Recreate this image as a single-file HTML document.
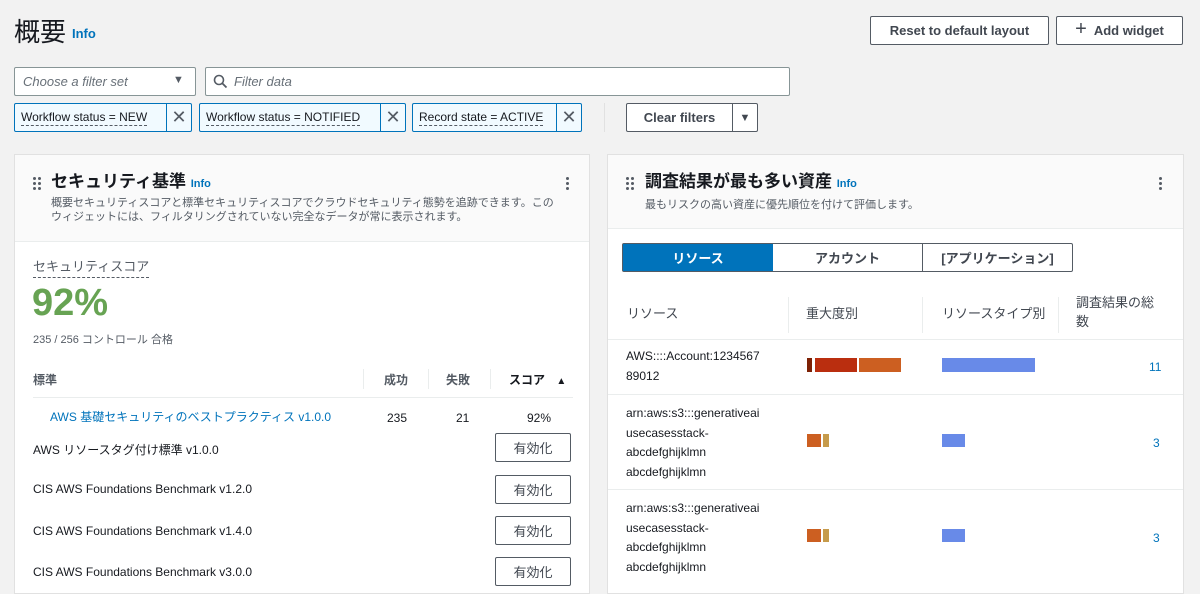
<!DOCTYPE html>
<html><head><meta charset="utf-8"><style>
*{box-sizing:border-box;margin:0;padding:0}
body{width:1200px;height:573px;overflow:hidden;background:#f2f2f2;font-family:"Liberation Sans","Noto Sans CJK JP",sans-serif;color:#16191f;position:relative}
.a{position:absolute;white-space:nowrap}
.btn{position:absolute;border:1px solid #545b64;background:#fff;border-radius:2px;font-weight:bold;font-size:13px;color:#414750;display:flex;align-items:center;justify-content:center;white-space:nowrap}
.tok{position:absolute;top:103px;height:29px;border:1px solid #0073bb;background:#f1faff;border-radius:2px;font-size:12px;display:flex;white-space:nowrap}
.tok span{flex:1;padding:0 6px;display:flex;align-items:center;border-right:1px solid #0073bb}
.tok span u{text-decoration:none;border-bottom:1px dashed #545b64;line-height:15px}
.tok b{width:24px;flex:none;display:flex;align-items:center;justify-content:center;font-weight:normal;font-size:18px;color:#545b64}
.panel{position:absolute;top:154px;background:#fff;border:1px solid #e1e1e1;height:440px}
.ph{background:#fafafa;border-bottom:1px solid #eaeded;position:relative}
.blue{color:#0073bb}
.dots{position:absolute;width:3px}
.dots i{display:block;width:3px;height:3px;background:#545b64;border-radius:50%;margin-bottom:2px}
.en{position:absolute;width:76px;height:29px;left:480px;font-size:13px;font-weight:normal}
.bar{position:absolute;height:14px}
</style></head><body>
<div class="a" style="left:14px;top:12px;font-size:26px;color:#16191f">概要</div>
<div class="a blue" style="left:72px;top:26px;font-size:13px;font-weight:bold">Info</div>
<div class="btn" style="left:870px;top:16px;width:179px;height:29px">Reset to default layout</div>
<div class="btn" style="left:1056px;top:16px;width:127px;height:29px"><span style="font-size:20px;font-weight:normal;margin-right:7px;margin-top:-2px">+</span>Add widget</div>

<div class="a" style="left:14px;top:67px;width:182px;height:29px;background:#fff;border:1px solid #879596;border-radius:2px"></div>
<div class="a" style="left:23px;top:74px;font-size:13px;font-style:italic;color:#687078">Choose a filter set</div>
<div class="a" style="left:173px;top:74px;font-size:11px;color:#545b64">▼</div>
<div class="a" style="left:205px;top:67px;width:585px;height:29px;background:#fff;border:1px solid #879596;border-radius:2px"></div>
<svg class="a" style="left:213px;top:74px" width="15" height="15" viewBox="0 0 15 15"><circle cx="6" cy="6" r="4.5" fill="none" stroke="#545b64" stroke-width="1.6"/><path d="M9.5 9.5L13.5 13.5" stroke="#545b64" stroke-width="1.8"/></svg>
<div class="a" style="left:234px;top:74px;font-size:13px;font-style:italic;color:#687078">Filter data</div>

<div class="tok" style="left:14px;width:178px"><span><u>Workflow status = NEW</u></span><b>✕</b></div>
<div class="tok" style="left:199px;width:207px"><span><u>Workflow status = NOTIFIED</u></span><b>✕</b></div>
<div class="tok" style="left:412px;width:170px"><span><u>Record state = ACTIVE</u></span><b>✕</b></div>
<div class="a" style="left:604px;top:103px;width:1px;height:29px;background:#e1e1e1"></div>
<div class="btn" style="left:626px;top:103px;width:132px;height:29px;justify-content:flex-start"><span style="width:106px;text-align:center;border-right:1px solid #545b64;line-height:27px">Clear filters</span><span style="flex:1;text-align:center;font-size:11px">▼</span></div>

<!-- left panel -->
<div class="panel" style="left:14px;width:576px">
 <div class="ph" style="height:87px">
  <div class="dots" style="left:18px;top:22px"><i></i><i></i><i></i></div><div class="dots" style="left:23px;top:22px"><i></i><i></i><i></i></div>
  <div class="a" style="left:36px;top:17px;font-size:17px;line-height:20px;font-weight:bold">セキュリティ基準 <span class="blue" style="font-size:11px">Info</span></div>
  <div class="a" style="left:36px;top:41px;font-size:11px;color:#545b64;line-height:14px">概要セキュリティスコアと標準セキュリティスコアでクラウドセキュリティ態勢を追跡できます。この<br>ウィジェットには、フィルタリングされていない完全なデータが常に表示されます。</div>
  <div class="dots" style="left:551px;top:22px"><i></i><i></i><i></i></div>
 </div>
 <div class="a" style="left:18px;top:103px;font-size:13px;color:#545b64;border-bottom:1px dashed #545b64;padding-bottom:2px;line-height:17px">セキュリティスコア</div>
 <div class="a" style="left:17px;top:128px;font-size:38px;line-height:40px;font-weight:bold;color:#67a353">92%</div>
 <div class="a" style="left:18px;top:176px;font-size:11px;color:#545b64">235 / 256 コントロール 合格</div>
 <div class="a" style="left:18px;top:216px;font-size:12px;font-weight:bold;color:#545b64">標準</div>
 <div class="a" style="left:348px;top:214px;width:1px;height:20px;background:#eaeded"></div>
 <div class="a" style="left:413px;top:214px;width:1px;height:20px;background:#eaeded"></div>
 <div class="a" style="left:475px;top:214px;width:1px;height:20px;background:#eaeded"></div>
 <div class="a" style="left:369px;top:216px;font-size:12px;font-weight:bold;color:#545b64">成功</div>
 <div class="a" style="left:431px;top:216px;font-size:12px;font-weight:bold;color:#545b64">失敗</div>
 <div class="a" style="left:494px;top:216px;font-size:12px;font-weight:bold">スコア <span style="font-size:10px;margin-left:8px">▲</span></div>
 <div class="a" style="left:18px;top:242px;width:540px;height:1px;background:#eaeded"></div>
 <div class="a blue" style="left:35px;top:253px;font-size:12px">AWS 基礎セキュリティのベストプラクティス v1.0.0</div>
 <div class="a" style="left:372px;top:256px;font-size:12px">235</div>
 <div class="a" style="left:441px;top:256px;font-size:12px">21</div>
 <div class="a" style="left:512px;top:256px;font-size:12px">92%</div>
 <div class="a" style="left:18px;top:286px;font-size:12px">AWS リソースタグ付け標準 v1.0.0</div>
 <div class="btn en" style="top:278px">有効化</div>
 <div class="a" style="left:18px;top:327px;font-size:12px">CIS AWS Foundations Benchmark v1.2.0</div>
 <div class="btn en" style="top:320px">有効化</div>
 <div class="a" style="left:18px;top:369px;font-size:12px">CIS AWS Foundations Benchmark v1.4.0</div>
 <div class="btn en" style="top:361px">有効化</div>
 <div class="a" style="left:18px;top:410px;font-size:12px">CIS AWS Foundations Benchmark v3.0.0</div>
 <div class="btn en" style="top:402px">有効化</div>
</div>

<!-- right panel -->
<div class="panel" style="left:607px;width:577px">
 <div class="ph" style="height:74px">
  <div class="dots" style="left:18px;top:22px"><i></i><i></i><i></i></div><div class="dots" style="left:23px;top:22px"><i></i><i></i><i></i></div>
  <div class="a" style="left:37px;top:17px;font-size:17px;line-height:20px;font-weight:bold">調査結果が最も多い資産 <span class="blue" style="font-size:11px">Info</span></div>
  <div class="a" style="left:37px;top:41px;font-size:11px;color:#545b64">最もリスクの高い資産に優先順位を付けて評価します。</div>
  <div class="dots" style="left:551px;top:22px"><i></i><i></i><i></i></div>
 </div>
 <div class="a" style="left:14px;top:88px;width:451px;height:29px;border:1px solid #545b64;border-radius:2px;display:flex;font-size:13px;font-weight:bold;color:#414750">
  <div style="width:150px;background:#0073bb;color:#fff;display:flex;align-items:center;justify-content:center">リソース</div>
  <div style="width:150px;border-right:1px solid #545b64;display:flex;align-items:center;justify-content:center">アカウント</div>
  <div style="flex:1;display:flex;align-items:center;justify-content:center">[アプリケーション]</div>
 </div>
 <div class="a" style="left:19px;top:148px;font-size:13px;color:#414750">リソース</div>
 <div class="a" style="left:180px;top:142px;width:1px;height:36px;background:#eaeded"></div>
 <div class="a" style="left:198px;top:148px;font-size:13px;color:#414750">重大度別</div>
 <div class="a" style="left:314px;top:142px;width:1px;height:36px;background:#eaeded"></div>
 <div class="a" style="left:334px;top:148px;font-size:13px;color:#414750">リソースタイプ別</div>
 <div class="a" style="left:450px;top:142px;width:1px;height:36px;background:#eaeded"></div>
 <div class="a" style="left:468px;top:138px;font-size:13px;color:#414750;line-height:19px">調査結果の総<br>数</div>
 <div class="a" style="left:0;top:184px;width:575px;height:1px;background:#eaeded"></div>
 <div class="a" style="left:18px;top:191px;font-size:12px;line-height:20px">AWS::::Account:1234567<br>89012</div>
 <div class="bar" style="left:199px;top:203px;width:5px;background:#7d2105"></div>
 <div class="bar" style="left:207px;top:203px;width:42px;background:#ba2e0f"></div>
 <div class="bar" style="left:251px;top:203px;width:42px;background:#cc5f21"></div>
 <div class="bar" style="left:334px;top:203px;width:93px;background:#688ae8"></div>
 <div class="a blue" style="left:541px;top:205px;font-size:12px">11</div>
 <div class="a" style="left:0;top:239px;width:575px;height:1px;background:#eaeded"></div>
 <div class="a" style="left:18px;top:249px;font-size:12px;line-height:19.5px">arn:aws:s3:::generativeai<br>usecasesstack-<br>abcdefghijklmn<br>abcdefghijklmn</div>
 <div class="bar" style="left:199px;top:279px;width:14px;height:13px;background:#cc5f21"></div>
 <div class="bar" style="left:215px;top:279px;width:6px;height:13px;background:#c69b4b"></div>
 <div class="bar" style="left:334px;top:279px;width:23px;height:13px;background:#688ae8"></div>
 <div class="a blue" style="left:545px;top:281px;font-size:12px">3</div>
 <div class="a" style="left:0;top:334px;width:575px;height:1px;background:#eaeded"></div>
 <div class="a" style="left:18px;top:344px;font-size:12px;line-height:19.5px">arn:aws:s3:::generativeai<br>usecasesstack-<br>abcdefghijklmn<br>abcdefghijklmn</div>
 <div class="bar" style="left:199px;top:374px;width:14px;height:13px;background:#cc5f21"></div>
 <div class="bar" style="left:215px;top:374px;width:6px;height:13px;background:#c69b4b"></div>
 <div class="bar" style="left:334px;top:374px;width:23px;height:13px;background:#688ae8"></div>
 <div class="a blue" style="left:545px;top:376px;font-size:12px">3</div>
</div>
</body></html>
